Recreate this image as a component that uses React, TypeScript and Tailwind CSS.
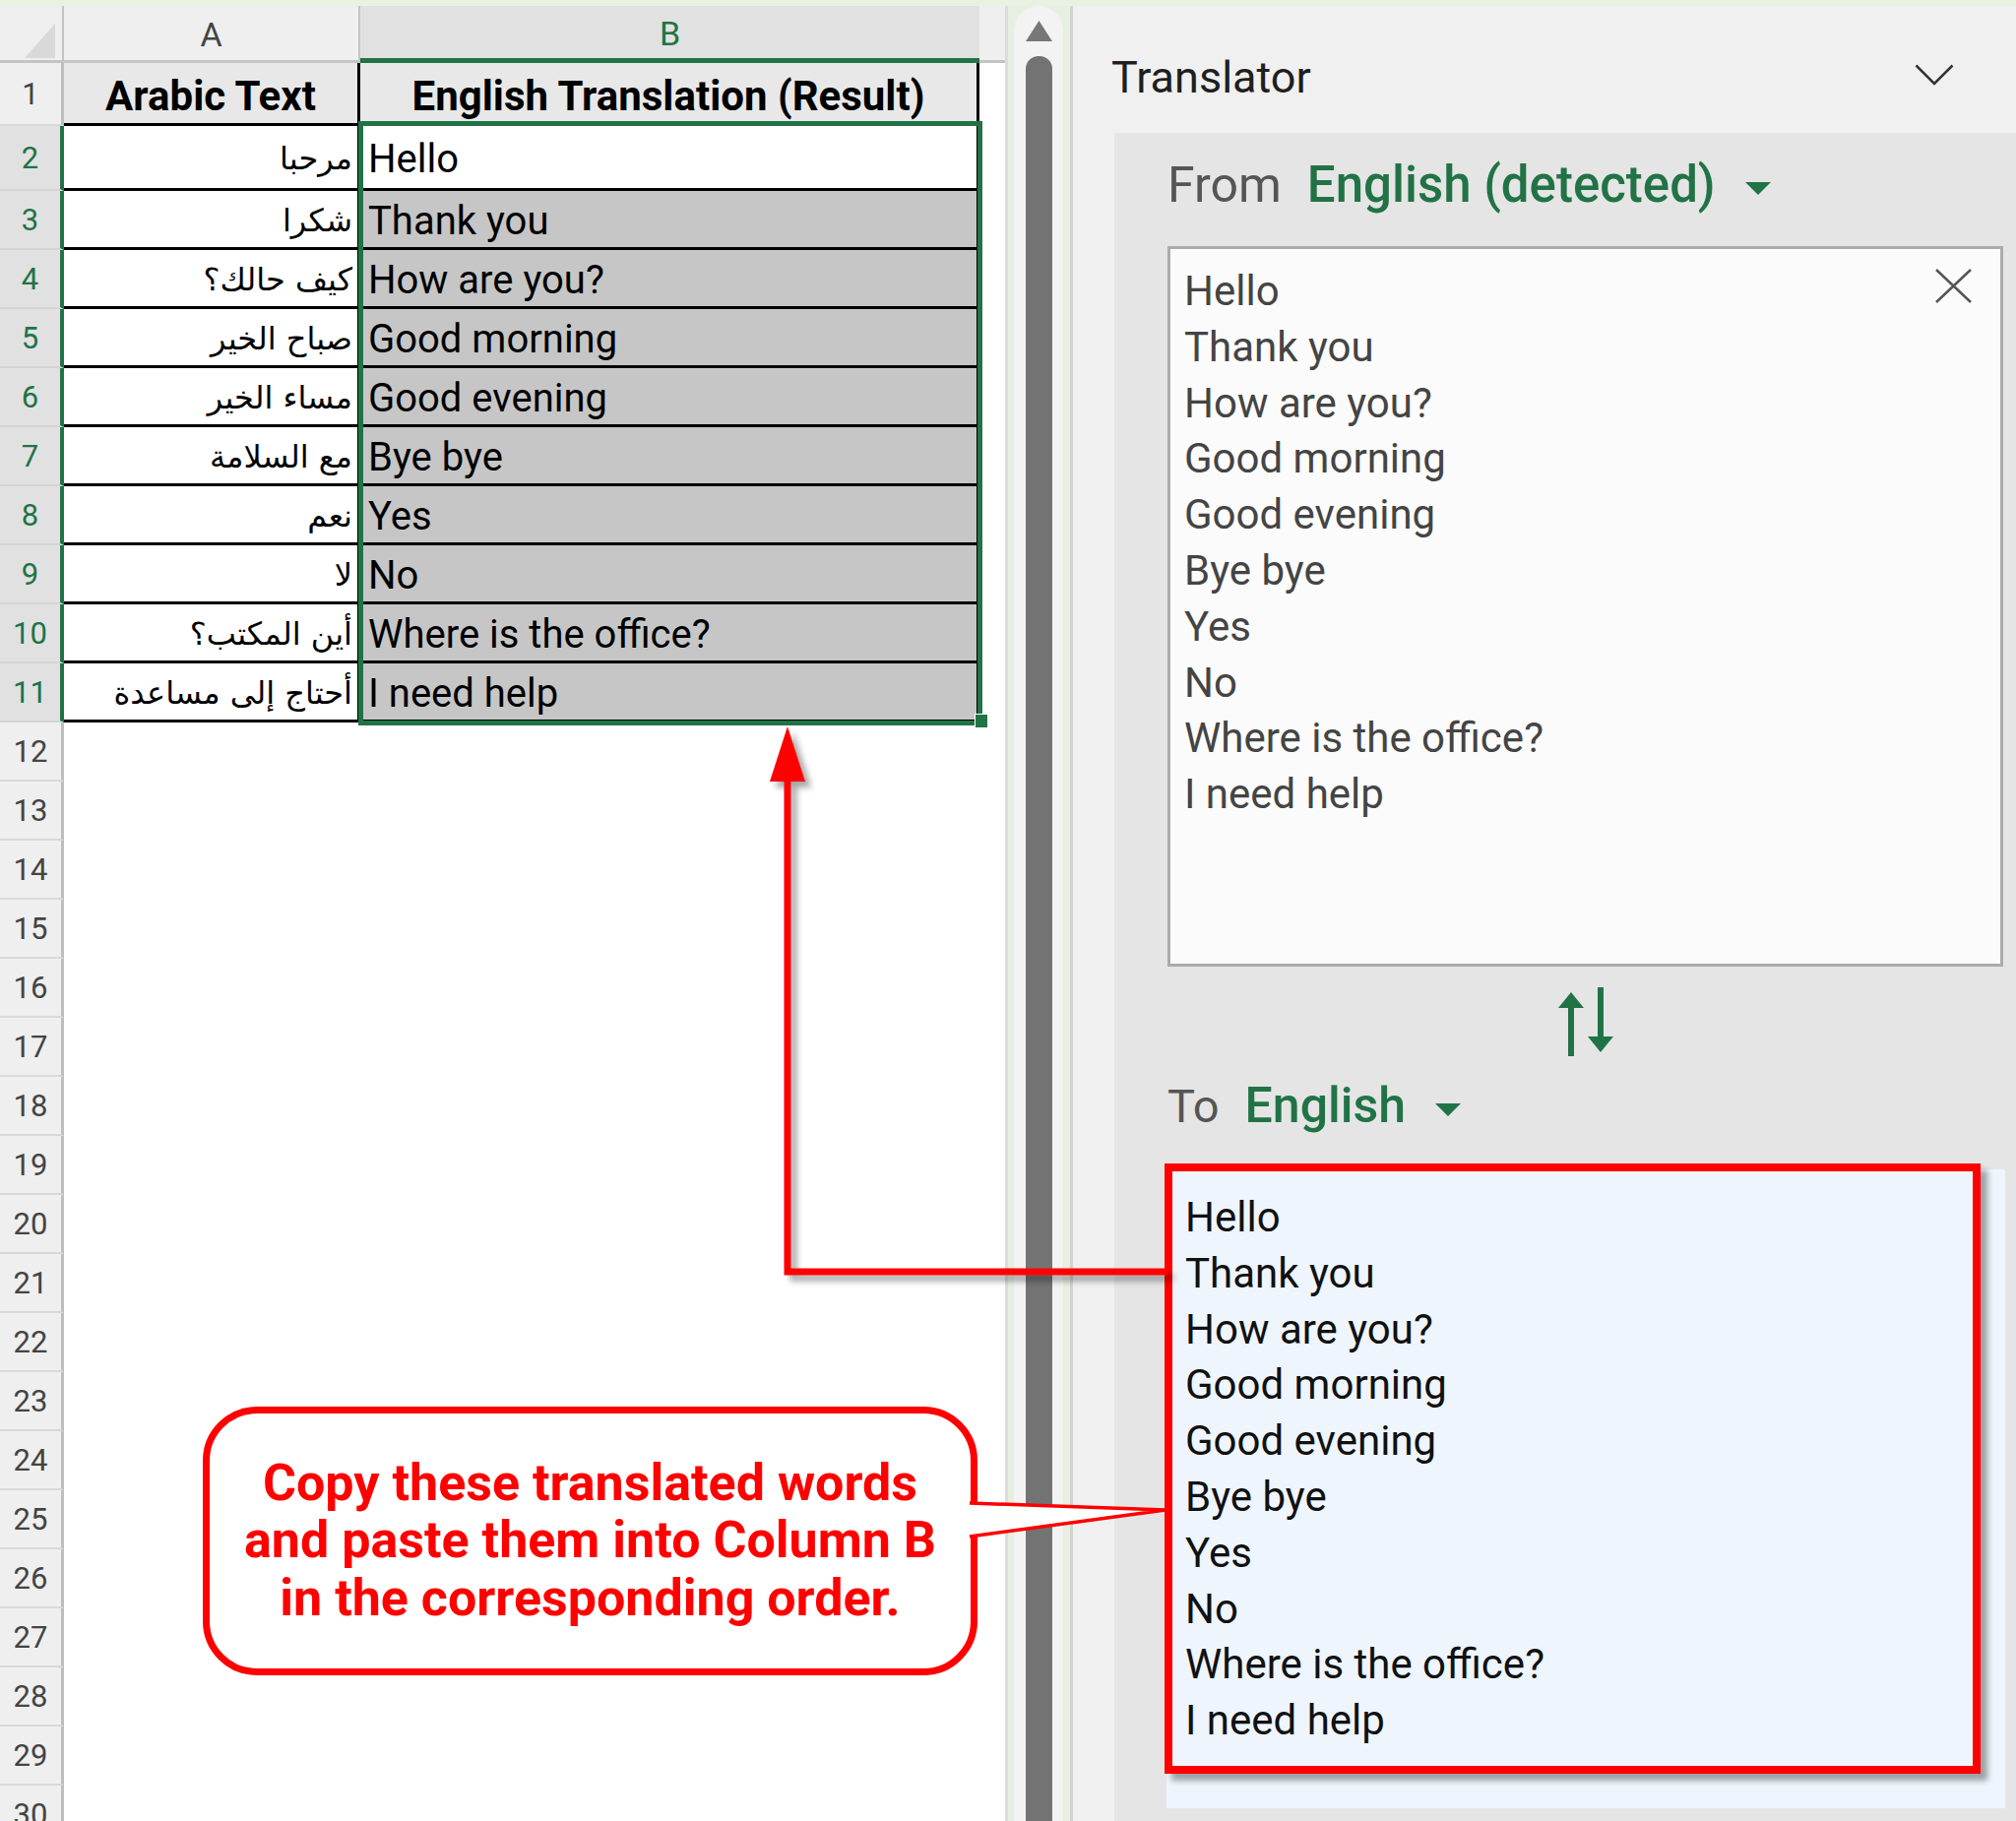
import React from "react";

const phrases = [
  { ar: "مرحبا", en: "Hello" },
  { ar: "شكرا", en: "Thank you" },
  { ar: "كيف حالك؟", en: "How are you?" },
  { ar: "صباح الخير", en: "Good morning" },
  { ar: "مساء الخير", en: "Good evening" },
  { ar: "مع السلامة", en: "Bye bye" },
  { ar: "نعم", en: "Yes" },
  { ar: "لا", en: "No" },
  { ar: "أين المكتب؟", en: "Where is the office?" },
  { ar: "أحتاج إلى مساعدة", en: "I need help" },
];

const emptyRows = Array.from({ length: 19 }, (_, i) => i + 12);

function RowHeader({ n, selected }: { n: number; selected?: boolean }) {
  return (
    <div
      className={
        selected
          ? "w-[65px] shrink-0 flex items-center justify-center pt-[3px] border-b-[2px] border-b-[#d4d4d4] border-r-[4px] border-r-[#217346] bg-[#e1e1e1] text-[31px] text-[#217346]"
          : "w-[65px] shrink-0 flex items-center justify-center pt-[3px] border-b-[2px] border-b-[#d9d9d9] border-r-[3px] border-r-[#bdbdbd] bg-[#efefef] text-[31px] text-[#444]"
      }
    >
      {n}
    </div>
  );
}

function Sheet() {
  return (
    <div className="relative w-[1021px] shrink-0 flex flex-col bg-white overflow-hidden">
      {/* column letters */}
      <div className="flex h-[58px] shrink-0">
        <div className="relative w-[65px] bg-[#efefef] border-r-[2px] border-b-[3px] border-[#c4c4c4]">
          <svg className="absolute right-[7px] bottom-[2px]" width="31" height="35" viewBox="0 0 31 35">
            <polygon points="31,0 31,35 0,35" fill="#d9d9d9" />
          </svg>
        </div>
        <div className="w-[301px] flex items-center justify-center pt-[4px] bg-[#efefef] border-r-[2px] border-b-[3px] border-[#c4c4c4] text-[34px] text-[#444]">
          A
        </div>
        <div className="w-[629px] flex items-center justify-center pt-[4px] bg-[#e1e1e1] border-b-[5px] border-[#217346] text-[34px] text-[#217346]">
          B
        </div>
        <div className="flex-1 bg-[#efefef] border-b-[3px] border-[#c4c4c4]" />
      </div>

      {/* row 1: titles */}
      <div className="flex h-[64px] shrink-0">
        <RowHeader n={1} />
        <div className="w-[301px] flex items-center justify-center pt-[6px] bg-[#e8e8e8] border-r-[3px] border-b-[3px] border-black text-[42px] font-bold text-black">
          Arabic Text
        </div>
        <div className="w-[629px] flex items-center justify-center pt-[6px] bg-[#e8e8e8] border-r-[3px] border-b-[3px] border-black text-[42px] font-bold text-black">
          English Translation (Result)
        </div>
        <div className="flex-1" />
      </div>

      {phrases.map((p, i) => (
        <div key={p.en} className={i === 0 ? "flex h-[66px] shrink-0" : "flex h-[60px] shrink-0"}>
          <RowHeader n={i + 2} selected />
          <div className="w-[301px] flex items-center justify-end pr-[5px] pt-[2px] border-r-[3px] border-b-[3px] border-black">
            <span dir="rtl" className="font-['DejaVu_Sans',sans-serif] text-[32px] text-black">
              {p.ar}
            </span>
          </div>
          <div
            className={
              i === 0
                ? "w-[629px] flex items-center pl-[8px] pt-[4px] bg-white border-r-[3px] border-b-[3px] border-black text-[40px] text-black"
                : "w-[629px] flex items-center pl-[8px] pt-[4px] bg-[#c6c6c6] border-r-[3px] border-b-[3px] border-black text-[40px] text-black"
            }
          >
            {p.en}
          </div>
          <div className="flex-1" />
        </div>
      ))}

      {emptyRows.map((n) => (
        <div key={n} className="flex h-[60px] shrink-0">
          <RowHeader n={n} />
          <div className="flex-1" />
        </div>
      ))}

      {/* selected range B2:B11 with fill handle */}
      <div className="absolute left-[364px] top-[117px] w-[634px] h-[614px] border-[5px] border-[#217346]" />
      <div className="absolute left-[990px] top-[719px] w-[14px] h-[15px] bg-[#217346] border border-white" />
    </div>
  );
}

function ScrollStrip() {
  return (
    <div className="w-[66px] shrink-0 flex border-l-[3px] border-[#dcdcdc] bg-[#e6efe0] pl-[6px] pr-[7px]">
      <div className="w-[50px] flex flex-col items-center pt-[15px] bg-[#f3f3f3] rounded-t-[25px]">
        <svg width="27" height="21" viewBox="0 0 27 21">
          <polygon points="13.5,0 27,21 0,21" fill="#777" />
        </svg>
        <div className="mt-[15px] w-[27px] flex-1 bg-[#737373] rounded-t-[13px]" />
      </div>
    </div>
  );
}

function DropArrow() {
  return (
    <svg className="ml-[30px] mt-[8px]" width="26" height="13" viewBox="0 0 26 13">
      <polygon points="0,0 26,0 13,13" fill="#217346" />
    </svg>
  );
}

function TranslatorPane() {
  return (
    <div className="flex-1 flex flex-col bg-[#f0f0f0] border-l-[3px] border-[#d3d3d3]">
      <div className="h-[129px] shrink-0 flex items-start justify-between pl-[39px] pr-[63px] pt-[50px]">
        <span className="text-[45px] leading-none text-[#1f1f1f]">Translator</span>
        <svg className="mt-[9px]" width="40" height="22" viewBox="0 0 40 22">
          <path d="M1.5 1.5 L20 20 L38.5 1.5" fill="none" stroke="#333" strokeWidth="2.5" />
        </svg>
      </div>

      <div className="ml-[42px] flex-1 flex flex-col bg-[#e5e5e5]">
        <div className="h-[115px] shrink-0 flex items-center pl-[54px] pb-[10px]">
          <span className="text-[50px] leading-none text-[#555]">From</span>
          <span className="ml-[26px] text-[51px] leading-none font-medium text-[#217346]">English (detected)</span>
          <DropArrow />
        </div>

        <div className="relative ml-[54px] w-[849px] h-[732px] shrink-0 pl-[14px] pt-[15px] bg-[#fbfbfb] border-[3px] border-[#ababab] text-[42px] leading-[56.8px] text-[#444]">
          {phrases.map((p) => (
            <div key={p.en}>{p.en}</div>
          ))}
          <svg className="absolute right-[29px] top-[20px]" width="37" height="35" viewBox="0 0 37 35">
            <path d="M1 1 L36 34 M36 1 L1 34" fill="none" stroke="#555" strokeWidth="2.5" />
          </svg>
        </div>

        <div className="h-[98px] shrink-0 pl-[451px] pt-[21px]">
          <svg width="58" height="70" viewBox="0 0 58 70">
            <path d="M13 16 V70" stroke="#217346" strokeWidth="6" />
            <polygon points="13,5 0,21 26,21" fill="#217346" />
            <path d="M43 0 V54" stroke="#217346" strokeWidth="6" />
            <polygon points="43,66 30,50 56,50" fill="#217346" />
          </svg>
        </div>

        <div className="h-[108px] shrink-0 flex items-center pl-[54px] pb-[22px]">
          <span className="text-[47px] leading-none text-[#555]">To</span>
          <span className="ml-[26px] text-[50px] leading-none font-medium text-[#217346]">English</span>
          <DropArrow />
        </div>

        <div className="relative ml-[53px] w-[852px] h-[649px] shrink-0 pl-[19px] pt-[21px] bg-[#eef5fd] text-[42px] leading-[56.8px] text-[#111]">
          {phrases.map((p) => (
            <div key={p.en}>{p.en}</div>
          ))}
          <div className="absolute left-[-2px] top-[-6px] w-[829px] h-[620px] border-[8px] border-[#ff0000] shadow-[7px_7px_6px_rgba(0,0,0,0.35)]" />
        </div>
      </div>
    </div>
  );
}

export default function App() {
  return (
    <div className="relative w-[2048px] h-[1850px] overflow-hidden bg-[#e8f1e2] pt-[6px] font-['Roboto',sans-serif]">
      <div className="flex h-full">
        <Sheet />
        <ScrollStrip />
        <TranslatorPane />
      </div>

      {/* callout note */}
      <div className="absolute left-[206px] top-[1429px] w-[787px] h-[273px] flex items-center justify-center bg-white border-[7px] border-[#ff0000] rounded-[55px] text-center text-[52px] leading-[58.5px] font-bold text-[#ff0000]">
        <div>
          Copy these translated words
          <br />
          and paste them into Column B
          <br />
          in the corresponding order.
        </div>
      </div>

      <svg className="absolute left-0 top-0 pointer-events-none" width="2048" height="1850" viewBox="0 0 2048 1850">
        <defs>
          <filter id="arrowShadow" x="-20%" y="-20%" width="140%" height="140%">
            <feDropShadow dx="6" dy="6" stdDeviation="3" floodColor="#000" floodOpacity="0.35" />
          </filter>
        </defs>
        <g filter="url(#arrowShadow)">
          <path d="M1186 1292 H800 V790" fill="none" stroke="#ff0000" strokeWidth="7" />
          <polygon points="800,738 782,794 818,794" fill="#ff0000" />
        </g>
        <polygon points="983,1527 1184,1534 983,1561" fill="#fff" />
        <path d="M985 1527 L1184 1534 L985 1561" fill="none" stroke="#ff0000" strokeWidth="3.5" />
      </svg>
    </div>
  );
}
